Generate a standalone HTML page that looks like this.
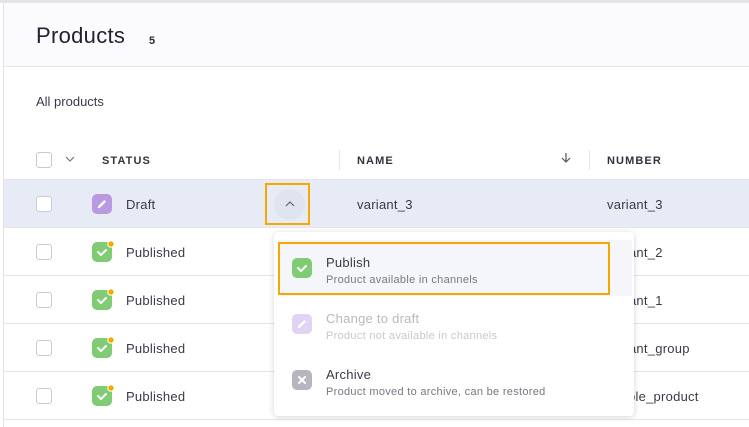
<!DOCTYPE html>
<html><head><style>
*{margin:0;padding:0;box-sizing:border-box}
body{width:749px;height:427px;overflow:hidden;background:#fff;font-family:"Liberation Sans",sans-serif;color:#3d3d4d;position:relative}
.a{position:absolute}
.cb{position:absolute;left:36px;width:16px;height:16px;border:1px solid #c9cbd2;border-radius:3px;background:#fff}
.t{position:absolute;font-size:13px;letter-spacing:.25px;color:#3a3a48}
.ic{position:absolute;width:20px;height:20px;border-radius:5px}
.sep{position:absolute;left:3px;right:0;height:1px;background:#e4e5ea}
.h{position:absolute;top:155px;font-size:11px;font-weight:bold;letter-spacing:1.1px;color:#333340}
.s{position:absolute;font-size:11px;letter-spacing:.3px}
</style></head><body>
<div class="a" style="left:0;top:0;width:749px;height:3px;background:#e4e4e6"></div>
<div class="a" style="left:3px;top:3px;width:1px;height:424px;background:#e4e4e6"></div>
<div class="a" style="left:4px;top:3px;right:0;height:64px;background:#fbfbfd;border-bottom:1px solid #e4e5ea"></div>
<div class="a" style="left:36px;top:23px;font-size:22px;letter-spacing:.3px;color:#1f2130">Products</div>
<div class="a" style="left:149px;top:35px;font-size:11px;font-weight:bold;color:#2a2a36">5</div>
<div class="a" style="left:36px;top:94px;font-size:13px;color:#3e3650">All products</div>

<div class="cb" style="top:152px"></div>
<svg class="a" style="left:65px;top:156px" width="10" height="7"><path d="M1 1l4 4 4-4" stroke="#777" fill="none" stroke-width="1.2"/></svg>
<div class="h" style="left:102px">STATUS</div>
<div class="a" style="left:339px;top:150px;width:1px;height:20px;background:#e4e5ea"></div>
<div class="h" style="left:357px">NAME</div>
<svg class="a" style="left:561px;top:152px" width="10" height="12"><path d="M5 1v9M1 6l4 4 4-4" stroke="#555" fill="none" stroke-width="1.2"/></svg>
<div class="a" style="left:589px;top:150px;width:1px;height:20px;background:#e4e5ea"></div>
<div class="h" style="left:607px">NUMBER</div>
<div class="sep" style="top:179px"></div>

<div class="a" style="left:4px;top:180px;right:0;height:47px;background:#e6ebf6"></div>
<div class="sep" style="top:227px"></div><div class="sep" style="top:275px"></div><div class="sep" style="top:323px"></div><div class="sep" style="top:371px"></div><div class="sep" style="top:419px"></div>

<div class="cb" style="top:196px"></div><div class="cb" style="top:244px"></div><div class="cb" style="top:292px"></div><div class="cb" style="top:340px"></div><div class="cb" style="top:388px"></div>

<div class="ic" style="left:92px;top:194px;background:#b99ae0"></div>
<svg class="a" style="left:96px;top:198px" width="12" height="12"><path d="M3 9l5.5-5.5" stroke="#fff" stroke-width="2.4" stroke-linecap="round"/></svg>
<div class="t" style="left:126px;top:197px">Draft</div>
<div class="t" style="left:357px;top:197px">variant_3</div>
<div class="t" style="left:607px;top:197px">variant_3</div>

<div class="a" style="left:265px;top:183px;width:45px;height:42px;border:2px solid #f5a800"></div>
<div class="a" style="left:274px;top:189px;width:31px;height:31px;border-radius:50%;background:#dfe4ef"></div>
<svg class="a" style="left:285px;top:201px" width="10" height="6"><path d="M1 5l4-4 4 4" stroke="#666" fill="none" stroke-width="1.2"/></svg>

<div class="ic" style="left:92px;top:242px;background:#7fcc75"></div><div class="t" style="left:126px;top:245px">Published</div>
<div class="ic" style="left:92px;top:290px;background:#7fcc75"></div><div class="t" style="left:126px;top:293px">Published</div>
<div class="ic" style="left:92px;top:338px;background:#7fcc75"></div><div class="t" style="left:126px;top:341px">Published</div>
<div class="ic" style="left:92px;top:386px;background:#7fcc75"></div><div class="t" style="left:126px;top:389px">Published</div>
<svg class="a" style="left:92px;top:238px" width="24" height="180">
<g stroke="#fff" stroke-width="2" fill="none" stroke-linecap="round"><path d="M6 14l3 3 5-5"/><path d="M6 62l3 3 5-5"/><path d="M6 110l3 3 5-5"/><path d="M6 158l3 3 5-5"/></g>
<g fill="#f5a800" stroke="#fff" stroke-width="1"><circle cx="19" cy="6" r="3.2"/><circle cx="19" cy="54" r="3.2"/><circle cx="19" cy="102" r="3.2"/><circle cx="19" cy="150" r="3.2"/></g>
</svg>
<div class="t" style="left:607px;top:245px">variant_2</div>
<div class="t" style="left:607px;top:293px">variant_1</div>
<div class="t" style="left:607px;top:341px">variant_group</div>
<div class="t" style="left:607px;top:389px">simple_product</div>

<div class="a" style="left:274px;top:232px;width:360px;height:184px;background:#fff;border-radius:4px;box-shadow:0 1px 6px rgba(0,0,0,.18)"></div>
<div class="a" style="left:278px;top:240px;width:354px;height:56px;background:#f5f6f9"></div>
<div class="a" style="left:278px;top:242px;width:332px;height:53px;border:2px solid #f5a800"></div>
<div class="ic" style="left:292px;top:258px;background:#7fcc75"></div>
<svg class="a" style="left:292px;top:258px" width="20" height="20"><path d="M6 10l3 3 5-5" stroke="#fff" stroke-width="2" fill="none" stroke-linecap="round"/></svg>
<div class="t" style="left:326px;top:255px">Publish</div>
<div class="s" style="left:326px;top:274px;color:#777884">Product available in channels</div>
<div class="ic" style="left:292px;top:314px;background:#e0d3f3"></div>
<svg class="a" style="left:296px;top:318px" width="12" height="12"><path d="M3 9l5.5-5.5" stroke="#fff" stroke-width="2.4" stroke-linecap="round"/></svg>
<div class="t" style="left:326px;top:311px;color:#b8b9c0">Change to draft</div>
<div class="s" style="left:326px;top:330px;color:#c8c9ce">Product not available in channels</div>
<div class="ic" style="left:292px;top:370px;background:#b5b6bf"></div>
<svg class="a" style="left:292px;top:370px" width="20" height="20"><path d="M7 7l6 6M13 7l-6 6" stroke="#fff" stroke-width="2" stroke-linecap="round"/></svg>
<div class="t" style="left:326px;top:367px">Archive</div>
<div class="s" style="left:326px;top:386px;color:#777884">Product moved to archive, can be restored</div>
</body></html>
